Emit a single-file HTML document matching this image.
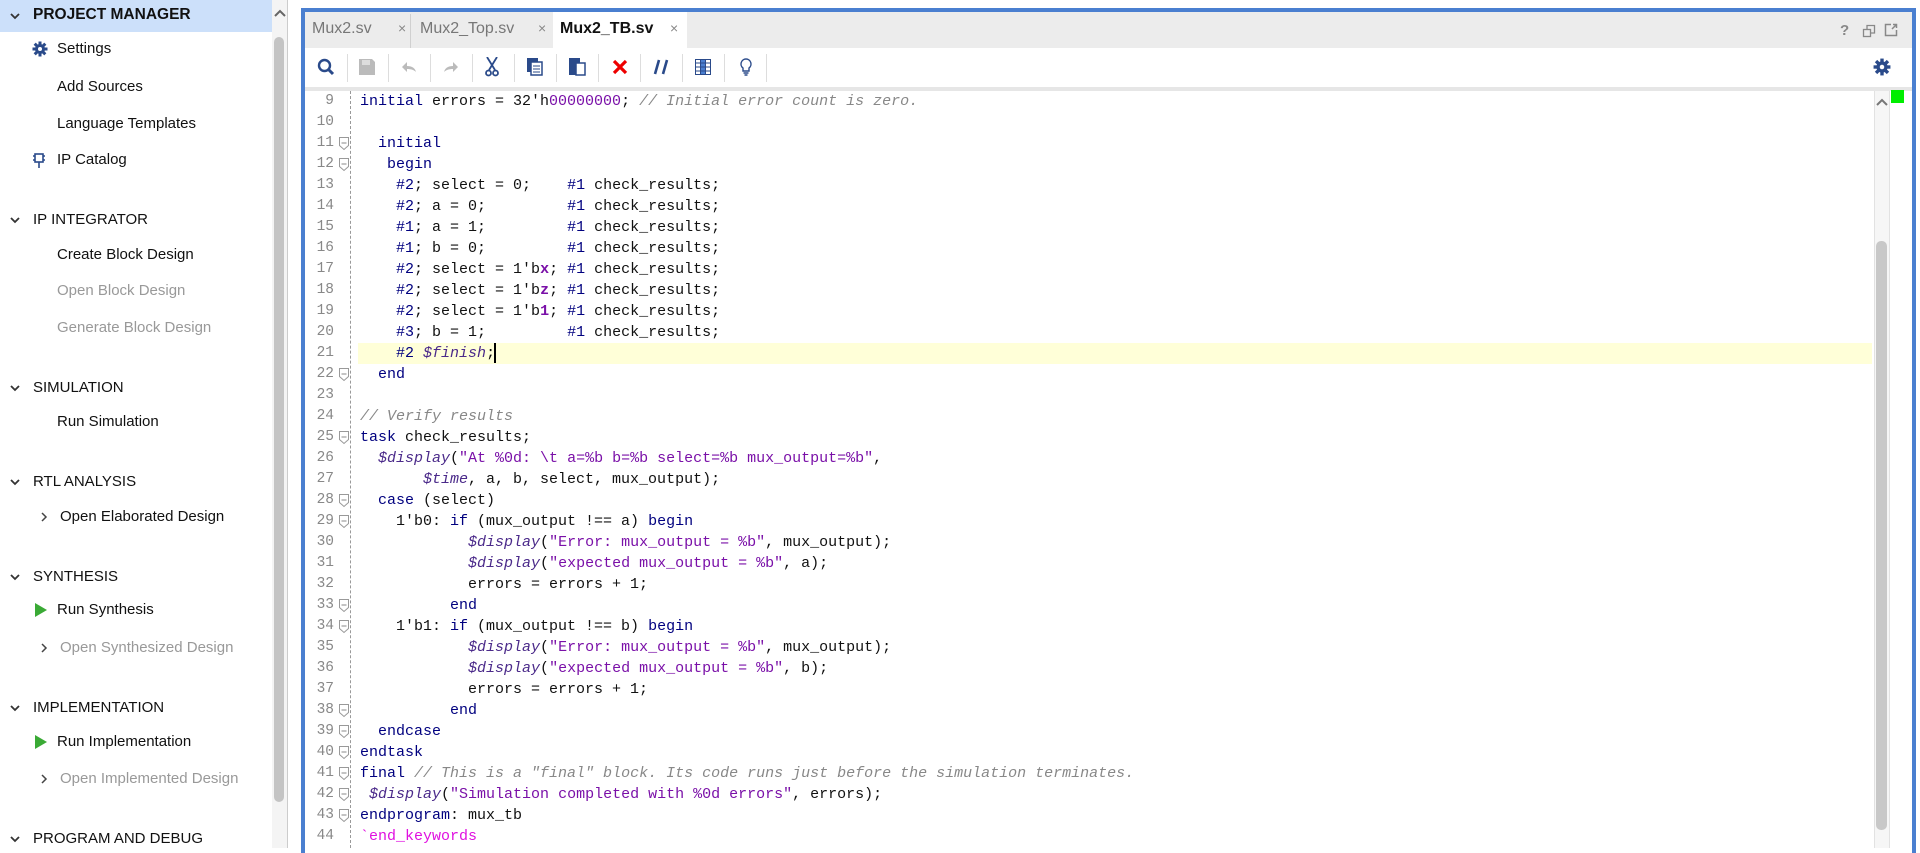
<!DOCTYPE html>
<html><head><meta charset="utf-8"><style>
*{margin:0;padding:0;box-sizing:border-box}
body{width:1920px;height:848px;overflow:hidden;background:#fff;font-family:"Liberation Sans",sans-serif;position:relative}
.a{position:absolute;white-space:nowrap}
.sb{font-size:15px;color:#111}
.h{font-size:15px;color:#111}
.g{color:#999}
.code{font-family:"Liberation Mono",monospace;font-size:15px;color:#111;white-space:pre}
.k{color:#00007f}
.p{color:#7a10a8}
.pb{color:#7a10a8;font-weight:bold}
.c{color:#888;font-style:italic}
.f{color:#4b2a8a;font-style:italic}
.m{color:#e010e0}
.ln{font-family:"Liberation Mono",monospace;font-size:14.5px;color:#888;text-align:right;width:40px}
.sep{position:absolute;top:54px;width:1px;height:28px;background:#ddd}
</style></head><body>
<!-- sidebar -->
<div class="a" style="left:0;top:0;width:272px;height:32px;background:#cce0fa"></div>
<div class="a" style="left:272px;top:0;width:15px;height:848px;background:#f4f4f4"></div>
<div class="a" style="left:274px;top:37px;width:10px;height:765px;background:#c4c4c4;border-radius:5px"></div>
<svg class="a" style="left:274px;top:8px" width="12" height="10"><path d="M1 8 L6 3 L11 8" stroke="#666" stroke-width="2" fill="none"/></svg>
<div class="a" style="left:287px;top:0;width:1px;height:848px;background:#ccc"></div>

<svg width="0" height="0" style="position:absolute"><defs>
<path id="chev" d="M1 2 L5 6 L9 2" stroke="#333" stroke-width="1.8" fill="none"/>
<path id="chr" d="M2 1 L6 5 L2 9" stroke="#444" stroke-width="1.5" fill="none"/>
</defs></svg>

<svg class="a" style="left:10px;top:12px" width="10" height="8"><use href="#chev"/></svg>
<div class="a sb" style="left:33px;top:6px;font-weight:bold;font-size:15.5px">PROJECT MANAGER</div>
<svg class="a" style="left:32px;top:41px" width="16" height="16" viewBox="0 0 16 16"><g fill="#2a4a8a"><circle cx="8" cy="8" r="5"/><rect x="6.5" y="0.5" width="3" height="15"/><rect x="0.5" y="6.5" width="15" height="3"/><rect x="6.5" y="0.5" width="3" height="15" transform="rotate(45 8 8)"/><rect x="6.5" y="0.5" width="3" height="15" transform="rotate(-45 8 8)"/></g><circle cx="8" cy="8" r="2" fill="#fff"/></svg>
<div class="a sb" style="left:57px;top:40px">Settings</div>
<div class="a sb" style="left:57px;top:78px">Add Sources</div>
<div class="a sb" style="left:57px;top:115px">Language Templates</div>
<svg class="a" style="left:32px;top:151px" width="14" height="18" viewBox="0 0 14 18"><g stroke="#2a4a8a" stroke-width="1.6" fill="none"><rect x="3" y="3" width="8" height="8"/><path d="M1 5h2M1 9h2M11 5h2M11 9h2M7 11v6"/></g></svg>
<div class="a sb" style="left:57px;top:151px">IP Catalog</div>

<svg class="a" style="left:10px;top:216px" width="10" height="8"><use href="#chev"/></svg>
<div class="a h" style="left:33px;top:211px">IP INTEGRATOR</div>
<div class="a sb" style="left:57px;top:246px">Create Block Design</div>
<div class="a sb g" style="left:57px;top:282px">Open Block Design</div>
<div class="a sb g" style="left:57px;top:319px">Generate Block Design</div>

<svg class="a" style="left:10px;top:384px" width="10" height="8"><use href="#chev"/></svg>
<div class="a h" style="left:33px;top:379px">SIMULATION</div>
<div class="a sb" style="left:57px;top:413px">Run Simulation</div>

<svg class="a" style="left:10px;top:478px" width="10" height="8"><use href="#chev"/></svg>
<div class="a h" style="left:33px;top:473px">RTL ANALYSIS</div>
<svg class="a" style="left:40px;top:512px" width="8" height="10"><use href="#chr"/></svg>
<div class="a sb" style="left:60px;top:508px">Open Elaborated Design</div>

<svg class="a" style="left:10px;top:573px" width="10" height="8"><use href="#chev"/></svg>
<div class="a h" style="left:33px;top:568px">SYNTHESIS</div>
<svg class="a" style="left:34px;top:602px" width="14" height="16"><path d="M1 1 L13 8 L1 15Z" fill="#3aaa35"/></svg>
<div class="a sb" style="left:57px;top:601px">Run Synthesis</div>
<svg class="a" style="left:40px;top:643px" width="8" height="10"><use href="#chr"/></svg>
<div class="a sb g" style="left:60px;top:639px">Open Synthesized Design</div>

<svg class="a" style="left:10px;top:704px" width="10" height="8"><use href="#chev"/></svg>
<div class="a h" style="left:33px;top:699px">IMPLEMENTATION</div>
<svg class="a" style="left:34px;top:734px" width="14" height="16"><path d="M1 1 L13 8 L1 15Z" fill="#3aaa35"/></svg>
<div class="a sb" style="left:57px;top:733px">Run Implementation</div>
<svg class="a" style="left:40px;top:774px" width="8" height="10"><use href="#chr"/></svg>
<div class="a sb g" style="left:60px;top:770px">Open Implemented Design</div>

<svg class="a" style="left:10px;top:835px" width="10" height="8"><use href="#chev"/></svg>
<div class="a h" style="left:33px;top:830px">PROGRAM AND DEBUG</div>

<!-- editor frame -->
<div class="a" style="left:301px;top:8px;width:1615px;height:845px;border:4px solid #4a7fd0;border-bottom:none"></div>
<div class="a" style="left:305px;top:12px;width:1607px;height:36px;background:#ececec"></div>
<div class="a" style="left:410px;top:14px;width:1px;height:34px;background:#d0d0d0"></div>
<div class="a" style="left:553px;top:12px;width:134px;height:36px;background:#fff"></div>
<div class="a" style="left:312px;top:20px;font-size:16px;color:#777">Mux2.sv</div>
<div class="a" style="left:398px;top:20px;font-size:14px;color:#888">×</div>
<div class="a" style="left:420px;top:20px;font-size:16px;color:#777">Mux2_Top.sv</div>
<div class="a" style="left:538px;top:20px;font-size:14px;color:#888">×</div>
<div class="a" style="left:560px;top:20px;font-size:16px;color:#111;font-weight:bold">Mux2_TB.sv</div>
<div class="a" style="left:670px;top:20px;font-size:14px;color:#888">×</div>
<div class="a" style="left:1840px;top:22px;font-size:15px;color:#888;font-weight:bold">?</div>
<svg class="a" style="left:1862px;top:24px" width="14" height="14"><g stroke="#888" stroke-width="1.3" fill="none"><rect x="1.5" y="5.5" width="7" height="7"/><path d="M5 5V1.5h7.5V9H9"/></g></svg>
<svg class="a" style="left:1884px;top:23px" width="14" height="14"><g stroke="#888" stroke-width="1.5" fill="none"><path d="M7 1.5H1.5v11h11V7"/><path d="M8 6l4.5-4.5M9 1.5h3.5V5"/></g></svg>

<!-- toolbar -->
<div class="a" style="left:305px;top:87px;width:1607px;height:4px;background:#e6e6e6"></div>
<div class="sep" style="left:347px"></div><div class="sep" style="left:388px"></div><div class="sep" style="left:430px"></div><div class="sep" style="left:472px"></div><div class="sep" style="left:514px"></div><div class="sep" style="left:556px"></div><div class="sep" style="left:598px"></div><div class="sep" style="left:640px"></div><div class="sep" style="left:682px"></div><div class="sep" style="left:724px"></div><div class="sep" style="left:766px"></div>
<svg class="a" style="left:317px;top:58px" width="18" height="18"><circle cx="7.5" cy="7.5" r="5.5" stroke="#2a4a8a" stroke-width="2.4" fill="none"/><path d="M11 11l5 5" stroke="#2a4a8a" stroke-width="3"/></svg>
<svg class="a" style="left:359px;top:59px" width="16" height="16"><path d="M0 0h13l3 3v13H0z" fill="#bbb"/><rect x="3" y="1" width="8" height="5" fill="#ddd"/></svg>
<svg class="a" style="left:401px;top:61px" width="16" height="12"><path d="M6 1L1 6l5 5V8c4 0 7 1 9 3-1-4-4-6-9-6z" fill="#bbb"/></svg>
<svg class="a" style="left:443px;top:61px" width="16" height="12"><path d="M10 1l5 5-5 5V8C6 8 3 9 1 11c1-4 4-6 9-6z" fill="#bbb"/></svg>
<svg class="a" style="left:485px;top:57px" width="14" height="20"><g stroke="#2a4a8a" stroke-width="1.8" fill="none"><path d="M2 0l8 13M12 0L4 13"/><circle cx="3.5" cy="16" r="2.5"/><circle cx="10.5" cy="16" r="2.5"/></g></svg>
<svg class="a" style="left:527px;top:58px" width="16" height="18"><rect x="0" y="0" width="11" height="14" fill="#2a4a8a"/><rect x="4" y="4" width="11" height="13" fill="#fff" stroke="#2a4a8a" stroke-width="1.5"/><path d="M6 8h7M6 11h7M6 14h7" stroke="#2a4a8a"/></svg>
<svg class="a" style="left:569px;top:58px" width="17" height="18"><rect x="0" y="0" width="11" height="17" fill="#2a4a8a"/><rect x="7" y="5" width="9" height="12" fill="#fff" stroke="#2a4a8a" stroke-width="1.5"/></svg>
<svg class="a" style="left:612px;top:59px" width="16" height="16"><path d="M2 2l12 12M14 2L2 14" stroke="#e00" stroke-width="3.2"/></svg>
<svg class="a" style="left:653px;top:59px" width="16" height="16"><path d="M6 1L2 15M14 1l-4 14" stroke="#2a4a8a" stroke-width="2.6"/></svg>
<svg class="a" style="left:695px;top:59px" width="16" height="16"><rect x="0.5" y="0.5" width="15" height="15" fill="#fff" stroke="#2a4a8a"/><rect x="6" y="1" width="4" height="14" fill="#4a7fd0"/><path d="M1 4h15M1 8h15M1 12h15M5.5 0v16M10.5 0v16" stroke="#2a4a8a"/></svg>
<svg class="a" style="left:740px;top:58px" width="12" height="18"><path d="M6 1a5 5 0 0 0-3 9v3h6v-3a5 5 0 0 0-3-9z" fill="none" stroke="#2a4a8a" stroke-width="1.4"/><path d="M3.5 15h5M4.5 17h3" stroke="#2a4a8a" stroke-width="1.4"/></svg>
<svg class="a" style="left:1873px;top:58px" width="18" height="18" viewBox="0 0 16 16"><g fill="#2a4a8a"><circle cx="8" cy="8" r="5"/><rect x="6.5" y="0.5" width="3" height="15"/><rect x="0.5" y="6.5" width="15" height="3"/><rect x="6.5" y="0.5" width="3" height="15" transform="rotate(45 8 8)"/><rect x="6.5" y="0.5" width="3" height="15" transform="rotate(-45 8 8)"/></g><circle cx="8" cy="8" r="2" fill="#fff"/></svg>

<!-- scrollbar -->
<div class="a" style="left:1874px;top:91px;width:16px;height:757px;background:#f6f6f6;border-left:1px solid #e2e2e2;border-right:1px solid #e2e2e2"></div>
<svg class="a" style="left:1876px;top:97px" width="12" height="10"><path d="M1 8L6 3l5 5" stroke="#777" stroke-width="2" fill="none"/></svg>
<div class="a" style="left:1876px;top:241px;width:11px;height:589px;background:#c8c8c8;border-radius:5px"></div>
<div class="a" style="left:1891px;top:90px;width:13px;height:13px;background:#00ee00"></div>

<!-- current line -->
<div class="a" style="left:358px;top:343px;width:1514px;height:21px;background:#ffffd8"></div>
<div class="a" style="left:494px;top:343px;width:2px;height:20px;background:#000"></div>
<!-- gutter dashed -->
<div class="a" style="left:350px;top:91px;width:0;height:757px;border-left:1px dashed #999"></div>

<div id="g"></div>
<script>
var L={
9:'<span class="k">initial</span> errors = 32\'h<span class="p">00000000</span>; <span class="c">// Initial error count is zero.</span>',
10:'',
11:'  <span class="k">initial</span>',
12:'   <span class="k">begin</span>',
13:'    <span class="k">#2</span>; select = 0;    <span class="k">#1</span> check_results;',
14:'    <span class="k">#2</span>; a = 0;         <span class="k">#1</span> check_results;',
15:'    <span class="k">#1</span>; a = 1;         <span class="k">#1</span> check_results;',
16:'    <span class="k">#1</span>; b = 0;         <span class="k">#1</span> check_results;',
17:'    <span class="k">#2</span>; select = 1\'b<span class="pb">x</span>; <span class="k">#1</span> check_results;',
18:'    <span class="k">#2</span>; select = 1\'b<span class="pb">z</span>; <span class="k">#1</span> check_results;',
19:'    <span class="k">#2</span>; select = 1\'b<span class="pb">1</span>; <span class="k">#1</span> check_results;',
20:'    <span class="k">#3</span>; b = 1;         <span class="k">#1</span> check_results;',
21:'    <span class="k">#2</span> <span class="f">$finish</span>;',
22:'  <span class="k">end</span>',
23:'',
24:'<span class="c">// Verify results</span>',
25:'<span class="k">task</span> check_results;',
26:'  <span class="f">$display</span>(<span class="p">"At %0d: \\t a=%b b=%b select=%b mux_output=%b"</span>,',
27:'       <span class="f">$time</span>, a, b, select, mux_output);',
28:'  <span class="k">case</span> (select)',
29:'    1\'b0: <span class="k">if</span> (mux_output !== a) <span class="k">begin</span>',
30:'            <span class="f">$display</span>(<span class="p">"Error: mux_output = %b"</span>, mux_output);',
31:'            <span class="f">$display</span>(<span class="p">"expected mux_output = %b"</span>, a);',
32:'            errors = errors + 1;',
33:'          <span class="k">end</span>',
34:'    1\'b1: <span class="k">if</span> (mux_output !== b) <span class="k">begin</span>',
35:'            <span class="f">$display</span>(<span class="p">"Error: mux_output = %b"</span>, mux_output);',
36:'            <span class="f">$display</span>(<span class="p">"expected mux_output = %b"</span>, b);',
37:'            errors = errors + 1;',
38:'          <span class="k">end</span>',
39:'  <span class="k">endcase</span>',
40:'<span class="k">endtask</span>',
41:'<span class="k">final</span> <span class="c">// This is a "final" block. Its code runs just before the simulation terminates.</span>',
42:' <span class="f">$display</span>(<span class="p">"Simulation completed with %0d errors"</span>, errors);',
43:'<span class="k">endprogram</span>: mux_tb',
44:'<span class="m">`end_keywords</span>'};
var F=[11,12,22,25,28,29,33,34,38,39,40,41,42,43];
var h='';
for(var n=9;n<=44;n++){var t=91+(n-9)*21;
h+='<div class="a ln" style="left:294px;top:'+(t+2)+'px">'+n+'</div>';
h+='<div class="a code" style="left:360px;top:'+(t+2)+'px">'+L[n]+'</div>';
if(F.indexOf(n)>=0)h+='<svg class="a" style="left:338px;top:'+(t+3)+'px" width="12" height="15"><path d="M1.5 1.5h9v8l-4.5 4-4.5-4z" fill="#fff" stroke="#999"/><path d="M3.5 7h5" stroke="#888"/></svg>';}
document.getElementById('g').innerHTML=h;
</script>
</body></html>
